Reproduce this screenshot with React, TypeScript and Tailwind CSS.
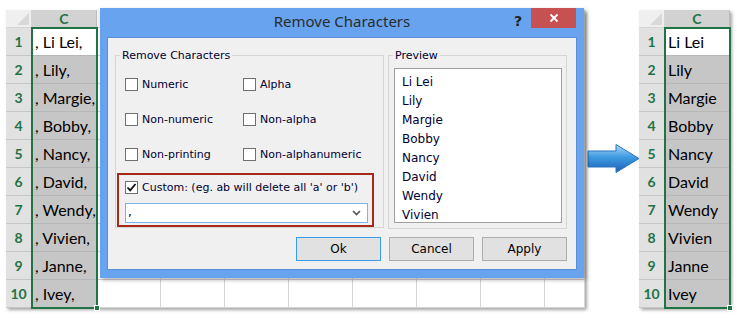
import React from 'react';

const names = ['Li Lei', 'Lily', 'Margie', 'Bobby', 'Nancy', 'David', 'Wendy', 'Vivien', 'Janne', 'Ivey'];

function Sheet({ comma, extra }: { comma: boolean; extra: number[] }) {
  const cellFont = { fontFamily: 'Lato, "Liberation Sans", sans-serif' };
  return (
    <div className="relative bg-white shadow-[2px_2px_3px_rgba(0,0,0,0.35)]" style={cellFont}>
      {/* header row */}
      <div className="flex h-[18px]">
        <div className="w-[26px] bg-[#efefef] border-r border-b border-[#d4d4d4] relative overflow-hidden">
          <div className="absolute right-[2px] bottom-[2px] w-0 h-0 border-l-[12px] border-l-transparent border-b-[12px] border-b-[#d9d9d9]" />
        </div>
        <div className="w-[65px] bg-[#d2d2d2] border-r border-[#bdbdbd] flex items-center justify-center text-[14px] font-bold text-[#217346] leading-none">
          C
        </div>
        {extra.map((w, i) => (
          <div key={i} className="bg-[#f3f3f3] border-r border-b border-[#d4d4d4]" style={{ width: w }} />
        ))}
      </div>
      {names.map((n, r) => (
        <div key={n} className="flex h-[28px]">
          <div className="w-[26px] bg-[#e1e1e1] border-r border-b border-[#c6c6c6] flex items-center justify-center text-[14px] font-bold text-[#217346]">
            {r + 1}
          </div>
          <div
            className={`w-[65px] border-b border-[#b8b8b8] flex items-center pl-[3px] text-[16px] text-black whitespace-nowrap ${r === 0 ? 'bg-white' : 'bg-[#c6c6c6]'}`}
          >
            {comma ? `, ${n},` : n}
          </div>
          {extra.map((w, i) => (
            <div key={i} className="border-r border-b border-[#d4d4d4]" style={{ width: w }} />
          ))}
        </div>
      ))}
      {/* selection outline */}
      <div className="absolute left-[25px] top-[17px] w-[67px] h-[282px] border-2 border-[#217346] pointer-events-none">
        <div className="absolute -right-[4px] -bottom-[4px] w-[6px] h-[6px] bg-[#217346] border border-white" />
      </div>
    </div>
  );
}

function Check({ checked }: { checked?: boolean }) {
  return (
    <span className="w-[13px] h-[13px] border border-[#707070] bg-white flex items-center justify-center shrink-0">
      {checked && (
        <svg width="11" height="11" viewBox="0 0 11 11">
          <path d="M1.5 5.5 L4.2 8.3 L9.5 2" fill="none" stroke="#111" strokeWidth="1.8" />
        </svg>
      )}
    </span>
  );
}

function Opt({ label, checked }: { label: string; checked?: boolean }) {
  return (
    <div className="flex items-center gap-[4px] h-[13px]">
      <Check checked={checked} />
      <span className="text-[#000033]">{label}</span>
    </div>
  );
}

function Btn({ label, primary }: { label: string; primary?: boolean }) {
  return (
    <button
      className={`w-[85px] h-[24px] bg-[#e1e1e1] border text-[12px] text-black ${primary ? 'border-[#3c9be8]' : 'border-[#adadad]'}`}
    >
      {label}
    </button>
  );
}

function Arrow() {
  return (
    <svg width="54" height="32" viewBox="0 0 54 32" className="mt-[143px] ml-[2px] shrink-0">
      <defs>
        <linearGradient id="ag" x1="0" y1="0" x2="0" y2="1">
          <stop offset="0" stopColor="#a8dcfa" />
          <stop offset="0.45" stopColor="#3f9be2" />
          <stop offset="1" stopColor="#1c5fb4" />
        </linearGradient>
      </defs>
      <path
        d="M1 8 H29 V1.5 L52 15.5 L29 29.5 V24 H1 Z"
        fill="url(#ag)"
        stroke="#2a74c4"
        strokeWidth="1"
        strokeLinejoin="round"
      />
    </svg>
  );
}

function Dialog() {
  return (
    <div
      className="absolute left-[100px] top-[8px] w-[484px] h-[270px] bg-[#67a3ee] flex flex-col shadow-[2px_2px_4px_rgba(0,0,0,0.3)]"
      style={{ fontFamily: '"DejaVu Sans", Tahoma, sans-serif' }}
    >
      {/* title bar */}
      <div className="h-[29px] relative flex items-center justify-center shrink-0">
        <span className="text-[15px] text-[#2b2b2b] -mt-[2px]" style={{ fontFamily: '"Noto Sans", "Open Sans", sans-serif' }}>
          Remove Characters
        </span>
        <span className="absolute right-[62px] top-[3px] text-[14px] font-bold text-[#222]">?</span>
        <div className="absolute right-[8px] top-0 w-[45px] h-[20px] bg-[#c75050] flex items-center justify-center">
          <svg width="10" height="10" viewBox="0 0 10 10">
            <path d="M1.5 1.5 L8.5 8.5 M8.5 1.5 L1.5 8.5" stroke="#fff" strokeWidth="1.8" />
          </svg>
        </div>
      </div>
      {/* client */}
      <div className="mx-[7px] h-[233px] bg-[#f0f0f0] border border-[#5a8fd6] text-[11px] leading-[13px] flex flex-col">
        <div className="flex gap-[4px] pl-[7px] mt-[11px]">
          <fieldset className="w-[269px] h-[179px] border border-[#d5d5d5] px-0 pb-0">
            <legend className="ml-[4px] px-[2px] text-[#000033] leading-[13px]">Remove Characters</legend>
            <div className="grid grid-cols-[118px_1fr] gap-y-[22px] pl-[9px] mt-[16px]">
              <Opt label="Numeric" />
              <Opt label="Alpha" />
              <Opt label="Non-numeric" />
              <Opt label="Non-alpha" />
              <Opt label="Non-printing" />
              <Opt label="Non-alphanumeric" />
            </div>
            <div className="ml-[1px] mt-[12px] w-[257px] h-[54px] border-2 border-[#a62a17] pl-[6px] pt-[6px]">
              <Opt label="Custom: (eg. ab will delete all 'a' or 'b')" checked />
              <div className="mt-[9px] w-[243px] h-[20px] bg-white border border-[#7eb4ea] flex items-center justify-between pl-[2px] pr-[6px]">
                <span className="text-[12px] -mt-[2px]">,</span>
                <svg width="9" height="6" viewBox="0 0 9 6">
                  <path d="M1 1 L4.5 4.5 L8 1" fill="none" stroke="#555" strokeWidth="1.6" />
                </svg>
              </div>
            </div>
          </fieldset>
          <fieldset className="w-[179px] h-[180px] border border-[#d5d5d5] px-0 pb-0">
            <legend className="ml-[4px] px-[2px] text-[#000033] leading-[13px]">Preview</legend>
            <div className="ml-[5px] mt-[6px] w-[168px] h-[155px] bg-white border border-[#a0a0a0] pl-[7px] pt-[4px]">
              {names.slice(0, 8).map((n) => (
                <div key={n} className="h-[19px] flex items-center text-[12px] text-[#000033]">
                  {n}
                </div>
              ))}
            </div>
          </fieldset>
        </div>
        <div className="flex justify-end gap-[8px] pr-[9px] mt-[8px]">
          <Btn label="Ok" primary />
          <Btn label="Cancel" />
          <Btn label="Apply" />
        </div>
      </div>
    </div>
  );
}

export default function App() {
  return (
    <div className="relative w-[737px] h-[318px] bg-white overflow-hidden flex items-start">
      <div className="ml-[6px] mt-[10px] shrink-0">
        <Sheet comma extra={[64, 64, 64, 64, 64, 64, 64, 40]} />
      </div>
      <Arrow />
      <div className="ml-[-2px] mt-[10px] shrink-0">
        <Sheet comma={false} extra={[]} />
      </div>
      <Dialog />
    </div>
  );
}
